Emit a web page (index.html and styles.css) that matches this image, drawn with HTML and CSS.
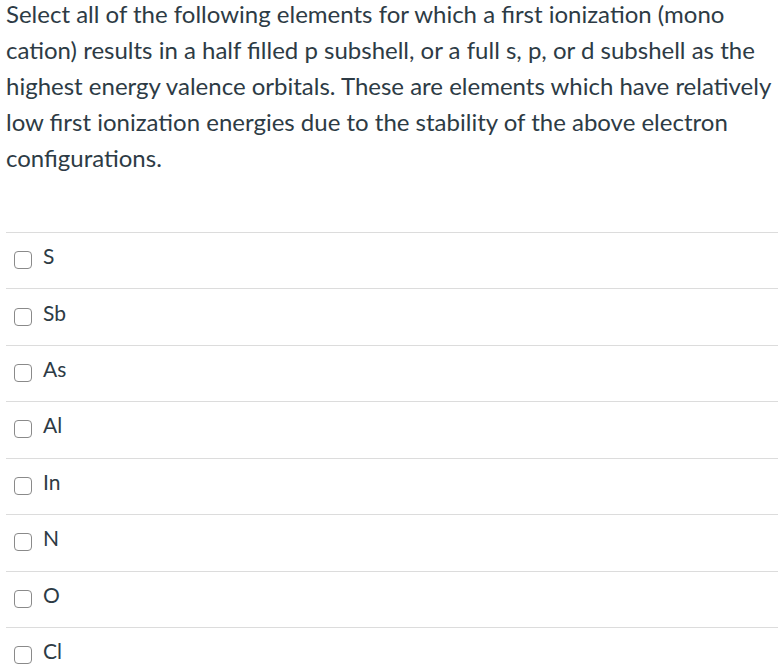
FILE: index.html
```html
<!DOCTYPE html>
<html>
<head>
<meta charset="utf-8">
<link rel="stylesheet" href="styles.css">
</head>
<body>
<div class="question">
  <p class="prompt">Select all of the following elements for which a first ionization (mono cation) results in a half filled p subshell, or a full s, p, or d subshell as the highest energy valence orbitals. These are elements which have relatively low first ionization energies due to the stability of the above electron configurations.</p>
  <div class="answers">
    <label class="answer"><span class="box"></span><span class="label">S</span></label>
    <label class="answer"><span class="box"></span><span class="label">Sb</span></label>
    <label class="answer"><span class="box"></span><span class="label">As</span></label>
    <label class="answer"><span class="box"></span><span class="label">Al</span></label>
    <label class="answer"><span class="box"></span><span class="label">In</span></label>
    <label class="answer"><span class="box"></span><span class="label">N</span></label>
    <label class="answer"><span class="box"></span><span class="label">O</span></label>
    <label class="answer"><span class="box"></span><span class="label">Cl</span></label>
  </div>
</div>
</body>
</html>
```
FILE: styles.css
```css
html, body {
  margin: 0;
  padding: 0;
  background: #ffffff;
}
body {
  font-family: Lato, "Liberation Sans", sans-serif;
  color: #2d3b45;
}
.question {
  padding-left: 6px;
}
.prompt {
  margin: -4px 0 0 0;
  font-size: 24px;
  line-height: 36px;
  width: 772px;
}
.answers {
  margin-top: 56px;
}
.answer {
  display: flex;
  align-items: center;
  height: 56.43px;
  padding-bottom: 3px;
  border-top: 1px solid #dcdcdc;
  box-sizing: border-box;
}
.box {
  width: 18px;
  height: 18px;
  box-sizing: border-box;
  border: 1.5px solid #8a8a8a;
  border-radius: 4px;
  margin-left: 8px;
  margin-right: 11px;
  margin-top: 2px;
  flex: none;
}
.label {
  font-size: 21px;
  line-height: 24px;
  margin-bottom: 6px;
}
```
